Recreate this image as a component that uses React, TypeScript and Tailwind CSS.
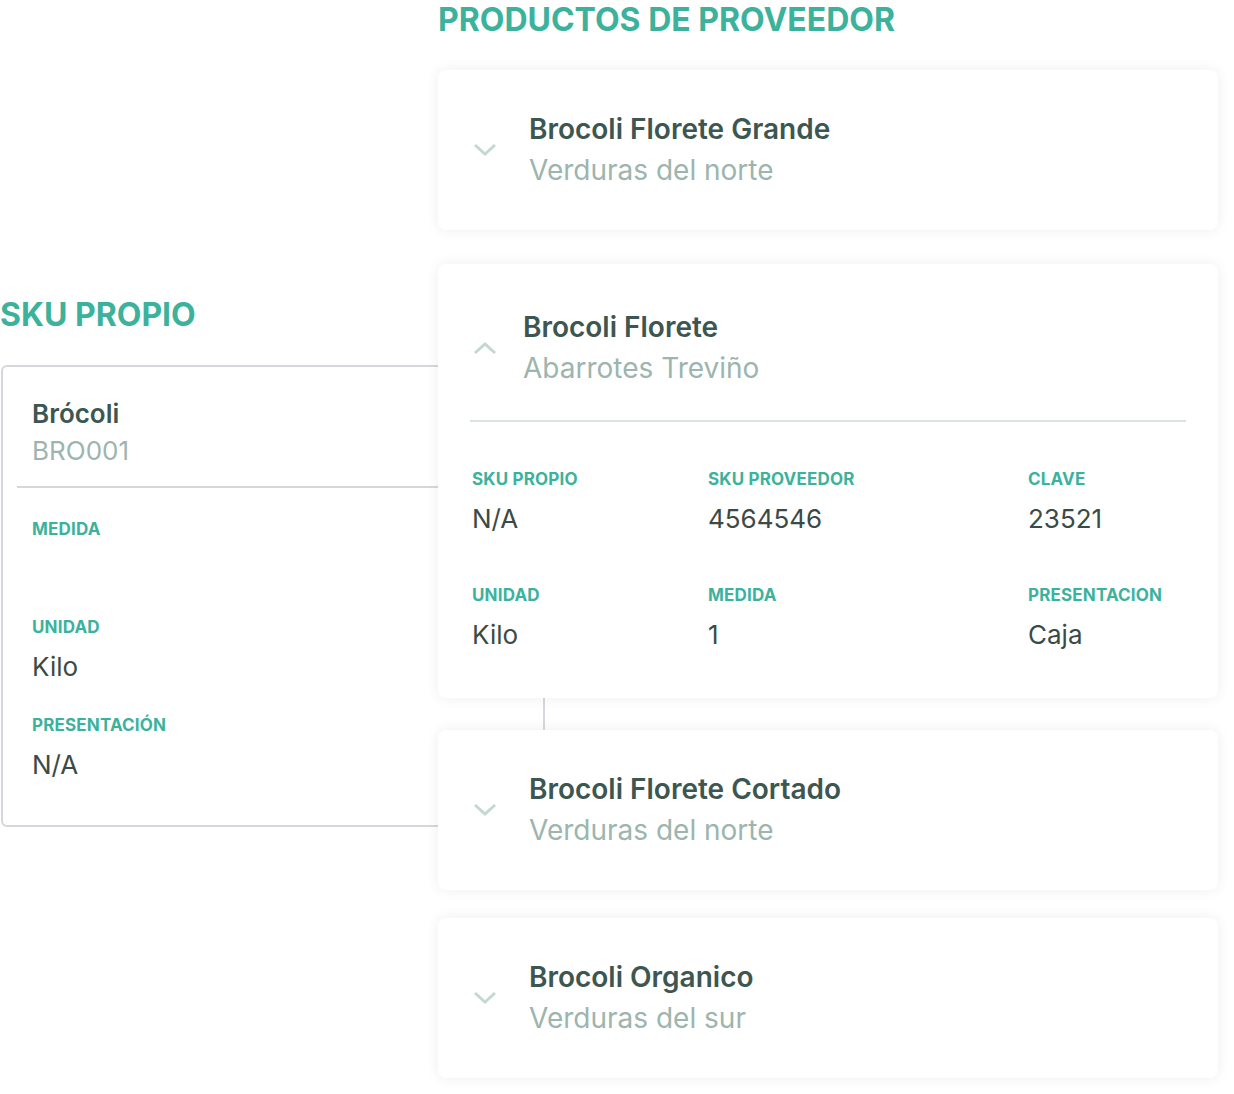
import type { ReactNode } from "react";

const font = { fontFamily: "Inter, 'Noto Sans', sans-serif" };

function Chevron({ up }: { up?: boolean }) {
  return (
    <svg width="24" height="14" viewBox="0 0 24 14" className="shrink-0">
      <path
        d={up ? "M2 12 L12 3 L22 12" : "M2 2 L12 11 L22 2"}
        fill="none"
        stroke="#c4d7d1"
        strokeWidth="3"
      />
    </svg>
  );
}

function Field({ label, value }: { label: string; value?: string }) {
  return (
    <div className="flex flex-col">
      <div className="h-[24px] text-[17px] leading-[24px] font-bold tracking-[0.01em] text-[#3cb29c]">{label}</div>
      <div className="mt-[10px] h-[36px] text-[26px] leading-[36px] text-[#3c4a46]">{value}</div>
    </div>
  );
}

function Card({ children, className = "" }: { children: ReactNode; className?: string }) {
  return (
    <div className={`rounded-lg bg-white shadow-[0_0_14px_rgba(0,0,0,0.07)] ${className}`}>{children}</div>
  );
}

function Collapsed({ title, sub, className = "" }: { title: string; sub: string; className?: string }) {
  return (
    <Card className={`flex h-[160px] items-center pl-[35px] ${className}`}>
      <Chevron />
      <div className="ml-[32px] flex flex-col">
        <div className="text-[28px] leading-[36px] font-semibold text-[#3e5650]">{title}</div>
        <div className="mt-[4px] text-[28px] leading-[38px] text-[#9cb5ae]">{sub}</div>
      </div>
    </Card>
  );
}

export default function App() {
  return (
    <div className="flex min-h-[1094px] w-[1234px] bg-white" style={font}>
      <div className="w-[438px] shrink-0 pt-[295px]">
        <h2 className="h-[40px] text-[32px] leading-[40px] font-bold text-[#3cb29c]">SKU PROPIO</h2>
        <div className="mt-[30px] ml-[1px] w-[544px] rounded-md border-2 border-[#d5d7dc] bg-white">
          <div className="px-[29px] pt-[29px] pb-[16px]">
            <div className="text-[26px] leading-[36px] font-semibold text-[#3e5650]">Brócoli</div>
            <div className="text-[26px] leading-[38px] text-[#9cb5ae]">BRO001</div>
          </div>
          <div className="mx-[14px] h-[2px] bg-[#d5d7dc]" />
          <div className="flex flex-col gap-[28px] px-[29px] pt-[29px] pb-[42px]">
            <Field label="MEDIDA" />
            <Field label="UNIDAD" value="Kilo" />
            <Field label="PRESENTACIÓN" value="N/A" />
          </div>
        </div>
      </div>

      <div className="relative z-10 w-[780px] shrink-0">
        <h1 className="h-[40px] text-[32px] leading-[40px] font-bold text-[#3cb29c]">PRODUCTOS DE PROVEEDOR</h1>
        <Collapsed className="mt-[30px]" title="Brocoli Florete Grande" sub="Verduras del norte" />

        <Card className="mt-[34px] h-[434px]">
          <div className="flex items-center pt-[45px] pl-[35px]">
            <Chevron up />
            <div className="ml-[26px] flex flex-col">
              <div className="text-[28px] leading-[36px] font-semibold text-[#3e5650]">Brocoli Florete</div>
              <div className="mt-[4px] text-[28px] leading-[38px] text-[#9cb5ae]">Abarrotes Treviño</div>
            </div>
          </div>
          <div className="mx-[32px] mt-[33px] h-[2px] bg-[#d9e3e0]" />
          <div className="grid grid-cols-[236px_320px_1fr] gap-y-[46px] pt-[45px] pl-[34px]">
            <Field label="SKU PROPIO" value="N/A" />
            <Field label="SKU PROVEEDOR" value="4564546" />
            <Field label="CLAVE" value="23521" />
            <Field label="UNIDAD" value="Kilo" />
            <Field label="MEDIDA" value="1" />
            <Field label="PRESENTACION" value="Caja" />
          </div>
        </Card>

        <Collapsed className="mt-[32px]" title="Brocoli Florete Cortado" sub="Verduras del norte" />
        <Collapsed className="mt-[28px]" title="Brocoli Organico" sub="Verduras del sur" />
      </div>
    </div>
  );
}
